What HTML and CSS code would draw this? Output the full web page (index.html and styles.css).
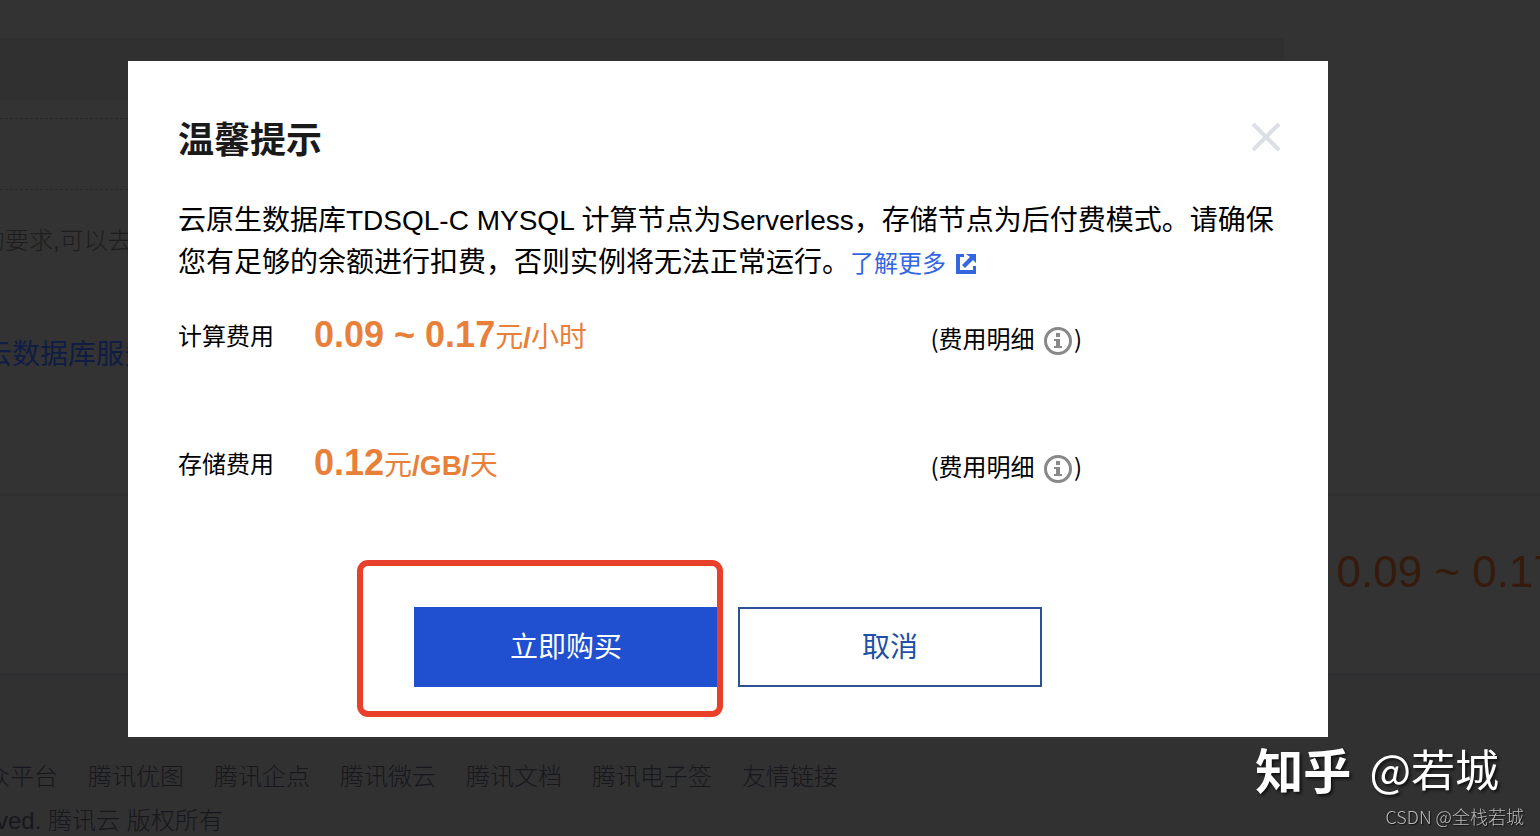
FILE: index.html
```html
<!DOCTYPE html>
<html lang="zh-CN">
<head>
<meta charset="utf-8">
<title>温馨提示</title>
<link rel="stylesheet" href="styles.css">
</head>
<body>
<div class="page">
  <main class="config">
    <div class="config-band"></div>
    <div class="config-row"></div>
    <p class="config-hint">的要求,可以去</p>
    <a class="config-link" href="#">云数据库服务</a>
  </main>
  <section class="price-bar">
    <span class="price-total">0.09 ~ 0.17</span>
  </section>
  <footer class="footer">
    <nav class="footer-nav">
      <a href="#">公众平台</a>
      <a href="#">腾讯优图</a>
      <a href="#">腾讯企点</a>
      <a href="#">腾讯微云</a>
      <a href="#">腾讯文档</a>
      <a href="#">腾讯电子签</a>
      <a href="#">友情链接</a>
    </nav>
    <p class="copyright">ved. 腾讯云 版权所有</p>
  </footer>
</div>

<div class="overlay">
  <div class="dialog" role="dialog" aria-modal="true" aria-labelledby="dialog-title">
    <header class="dialog-head">
      <h1 class="dialog-title" id="dialog-title">温馨提示</h1>
      <button class="dialog-close" type="button" aria-label="关闭">
        <svg width="32" height="32" viewBox="0 0 32 32" fill="none" stroke="#dcdfe5" stroke-width="4"><path d="M3 3 29 29M29 3 3 29"/></svg>
      </button>
    </header>
    <p class="dialog-text">云原生数据库TDSQL-C MYSQL 计算节点为Serverless，存储节点为后付费模式。请确保您有足够的余额进行扣费，否则实例将无法正常运行。<a class="more" href="#">了解更多<svg class="more-icon" width="20" height="20" viewBox="0 0 20 20" aria-hidden="true"><path fill="#3366e0" d="M0 0H8V3H4V16H17V12H20V20H0ZM10 0H20V9L17 6 9 14 6 11 14 3Z"/></svg></a></p>
    <div class="fees">
      <div class="fee">
        <span class="fee-label">计算费用</span>
        <span class="fee-value"><b>0.09 ~ 0.17</b><span class="unit">元<b>/</b>小时</span></span>
        <span class="fee-detail">(费用明细
          <svg class="info" width="28" height="28" viewBox="0 0 28 28" aria-hidden="true"><circle cx="14" cy="14" r="12.500" fill="none" stroke="#888" stroke-width="3"/><path fill="#888" d="M12 6h4v4h-4zM10 12h6v7h2v2h-8v-2h2v-5h-2z"/></svg>)</span>
      </div>
      <div class="fee">
        <span class="fee-label">存储费用</span>
        <span class="fee-value"><b>0.12</b><span class="unit">元<b>/GB/</b>天</span></span>
        <span class="fee-detail">(费用明细
          <svg class="info" width="28" height="28" viewBox="0 0 28 28" aria-hidden="true"><circle cx="14" cy="14" r="12.500" fill="none" stroke="#888" stroke-width="3"/><path fill="#888" d="M12 6h4v4h-4zM10 12h6v7h2v2h-8v-2h2v-5h-2z"/></svg>)</span>
      </div>
    </div>
    <div class="actions">
      <div class="marked">
        <button class="btn btn-primary" type="button">立即购买</button>
      </div>
      <button class="btn btn-outline" type="button">取消</button>
    </div>
  </div>
</div>

<div class="credits">
  <div class="credit-main"><span class="credit-site">知乎</span><span>@若城</span></div>
  <div class="credit-sub">CSDN @全栈若城</div>
</div>
</body>
</html>
```
FILE: styles.css
```css
* {
  box-sizing: border-box;
}

body {
  margin: 0;
  background: #323232;
  font-family: "Liberation Sans", "Noto Sans CJK SC", sans-serif;
  font-weight: 300;
  color: #000;
  overflow: hidden;
}

p,
h1 {
  margin: 0;
}

b {
  font-weight: 700;
}

a {
  text-decoration: none;
}

button {
  font: inherit;
  cursor: pointer;
}

/* Page behind the dialog, in its dimmed colours */
.page {
  display: flex;
  flex-direction: column;
  min-height: 100vh;
  white-space: nowrap;
  overflow: hidden;
}

.config {
  display: flex;
  flex-direction: column;
  align-items: flex-start;
  height: 493px;
  padding-top: 38px;
  background: #333;
}

.config-band {
  width: calc(100% - 256px);
  height: 62px;
  background: #303030;
}

.config-row {
  width: calc(100% - 256px);
  height: 72px;
  margin-top: 18px;
  border: 1px dashed #282828;
  border-width: 1px 0;
}

.config-hint {
  margin: 33px 0 0 -19px;
  font-size: 24px;
  line-height: 36px;
  color: #1d1d1d;
}

.config-link {
  margin: 75px 0 0 -16px;
  font-size: 28px;
  line-height: 42px;
  font-weight: 400;
  color: #101c44;
}

.price-bar {
  display: flex;
  align-items: center;
  justify-content: flex-end;
  height: 180px;
  padding-bottom: 26px;
  border-top: 3px solid #303030;
  background: #333;
}

.price-total {
  margin-right: -18px;
  font-size: 44px;
  color: #361b0c;
}

.footer {
  flex: 1;
  padding-top: 83px;
  border-top: 3px solid #2f2f31;
  background: #313131;
  font-size: 24px;
  line-height: 36px;
  color: #17171d;
}

.footer-nav {
  display: flex;
  gap: 30px;
  margin-left: -38px;
}

.footer-nav a {
  color: inherit;
}

.copyright {
  margin: 8px 0 0 -4px;
}

/* Dialog */
.overlay {
  position: fixed;
  inset: 0;
  padding: 61px 212px 0 128px;
}

.dialog {
  padding: 56px 50px 50px;
  background: #fff;
  font-weight: 400;
}

.dialog-head {
  display: flex;
  align-items: center;
  justify-content: space-between;
  height: 48px;
}

.dialog-title {
  font-size: 36px;
  line-height: 48px;
  font-weight: 700;
  color: #1a1a1a;
}

.dialog-close {
  display: flex;
  margin: 0 -4px 8px 0;
  padding: 0;
  border: 0;
  background: none;
}

.dialog-text {
  margin-top: 35px;
  font-size: 28px;
  line-height: 42px;
}

.more {
  font-size: 24px;
  color: #3366e0;
}

.more-icon {
  margin-left: 10px;
  vertical-align: -2px;
}

.fees {
  display: grid;
  gap: 88px;
  margin-top: 30px;
}

.fee {
  display: grid;
  grid-template-columns: 136px 7fr 4fr;
  align-items: center;
  height: 40px;
  font-size: 24px;
  line-height: 40px;
}

.fee-value {
  font-size: 36px;
  color: #e8803a;
}

.unit {
  font-size: 28px;
}

.fee-detail {
  padding: 2px 0 0 3px;
  font-family: "Noto Sans CJK SC", sans-serif;
}

.info {
  margin: 0 2px 0 4px;
  vertical-align: -7px;
}

.actions {
  display: flex;
  justify-content: center;
  gap: 20px;
  margin-top: 124px;
}

.btn {
  display: block;
  width: 304px;
  height: 80px;
  padding: 2px 0 0;
  border: 2px solid #2050d0;
  font-size: 28px;
  line-height: 40px;
}

.btn-primary {
  background: #2050d0;
  color: #fff;
}

.btn-outline {
  border-color: #2c5294;
  background: #fff;
  color: #1f4fa8;
}

.marked {
  position: relative;
}

.marked::after {
  content: "";
  position: absolute;
  inset: -47px -5px -30px -57px;
  border: 6px solid #e8402a;
  border-radius: 11px;
  pointer-events: none;
}

/* Credits over the lower right corner */
.credits {
  position: fixed;
  right: 16px;
  bottom: 6px;
  text-align: right;
  font-family: "Noto Sans CJK SC", sans-serif;
  color: #fff;
}

.credit-main {
  display: flex;
  align-items: center;
  gap: 18px;
  margin-right: 25px;
  font-size: 44px;
  line-height: 68px;
  font-weight: 400;
  text-shadow: 2px 2px 3px #111;
}

.credit-site {
  font-size: 48px;
  font-weight: 700;
}

.credit-sub {
  font-size: 18px;
  line-height: 28px;
  color: #bbb;
  text-shadow: 1px 1px 1px #111;
}
```
